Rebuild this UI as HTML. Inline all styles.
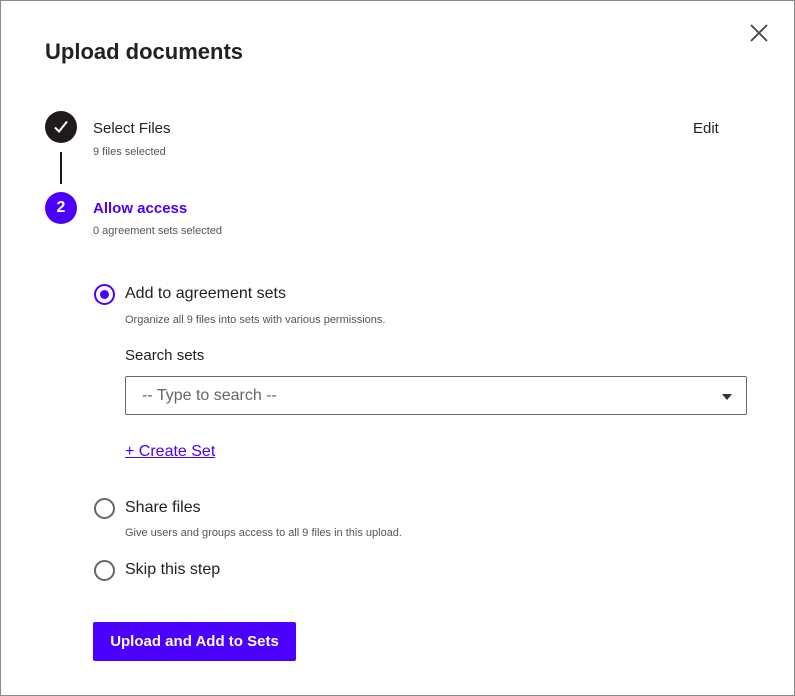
<!DOCTYPE html>
<html><head><style>
body{margin:0;width:795px;height:696px;font-family:"Liberation Sans",sans-serif;color:#222;background:#fff;position:relative;overflow:hidden}
.frame{position:absolute;left:0;top:0;width:793px;height:694px;border:1px solid #8a8a8a}
.a{position:absolute;white-space:nowrap}
.circ{position:absolute;width:32px;height:32px;border-radius:50%;color:#fff;display:flex;align-items:center;justify-content:center;font-weight:bold;font-size:16px}
.radio{position:absolute;width:17px;height:17px;border:2px solid #666;border-radius:50%}
.small{font-size:11px;color:#555}
</style></head><body>
<div class="frame"></div>
<div class="a" style="left:45px;top:39px;font-size:22px;font-weight:bold;color:#222">Upload documents</div>
<svg class="a" style="left:750px;top:24px" width="18" height="18" viewBox="0 0 18 18"><path d="M1 1L17 17M17 1L1 17" stroke="#444" stroke-width="1.8"/></svg>
<div class="circ" style="left:45px;top:111px;background:#1f1a1c"><svg width="16" height="16" viewBox="0 0 16 16"><path d="M2 8.5L6 12.5L14 2.5" stroke="#fff" stroke-width="2" fill="none"/></svg></div>
<div class="a" style="left:60px;top:152px;width:2px;height:32px;background:#1f1a1c"></div>
<div class="circ" style="left:45px;top:192px;background:#4b00ff">2</div>
<div class="a" style="left:93px;top:120px;font-size:15px">Select Files</div>
<div class="a small" style="left:93px;top:146px">9 files selected</div>
<div class="a" style="left:693px;top:120px;font-size:15px">Edit</div>
<div class="a" style="left:93px;top:200px;font-size:15px;font-weight:bold;color:#4b00ff">Allow access</div>
<div class="a small" style="left:93px;top:225px">0 agreement sets selected</div>
<div class="radio" style="left:94px;top:284px;border-color:#4b00ff"><div style="position:absolute;left:4px;top:4px;width:9px;height:9px;border-radius:50%;background:#4b00ff"></div></div>
<div class="a" style="left:125px;top:285px;font-size:16px">Add to agreement sets</div>
<div class="a small" style="left:125px;top:314px">Organize all 9 files into sets with various permissions.</div>
<div class="a" style="left:125px;top:347px;font-size:15px">Search sets</div>
<div class="a" style="left:125px;top:376px;width:620px;height:37px;border:1px solid #666;border-radius:2px"></div>
<div class="a" style="left:142px;top:387px;font-size:16px;color:#666">-- Type to search --</div>
<div class="a" style="left:722px;top:394px;width:0;height:0;border-left:5px solid transparent;border-right:5px solid transparent;border-top:6px solid #333"></div>
<div class="a" style="left:125px;top:443px;font-size:16px;color:#4b00ff;text-decoration:underline">+ Create Set</div>
<div class="radio" style="left:94px;top:498px"></div>
<div class="a" style="left:125px;top:499px;font-size:16px">Share files</div>
<div class="a small" style="left:125px;top:527px">Give users and groups access to all 9 files in this upload.</div>
<div class="radio" style="left:94px;top:560px"></div>
<div class="a" style="left:125px;top:561px;font-size:16px">Skip this step</div>
<div class="a" style="left:93px;top:622px;width:203px;height:39px;background:#4b00ff;border-radius:2px;color:#fff;font-weight:bold;font-size:15px;display:flex;align-items:center;justify-content:center">Upload and Add to Sets</div>
</body></html>
